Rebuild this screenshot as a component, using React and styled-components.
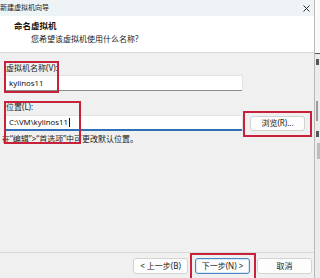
import React from "react";
import styled, { createGlobalStyle } from "styled-components";

const Global = createGlobalStyle`
  html, body { margin: 0; padding: 0; background: #f0f0f0; }
  body { font-family: "Noto Sans", "Noto Sans CJK SC", sans-serif; color: #1a1a1a; }
  #root { width: 320px; height: 278px; overflow: hidden; }
`;

const Screen = styled.div`
  width: 320px;
  height: 278px;
  display: flex;
  overflow: hidden;
`;

const Dialog = styled.div`
  position: relative;
  width: 314px;
  height: 278px;
  display: flex;
  flex-direction: column;
  background: #f0f0f0;
  border-right: 1px solid #b9b9b9;
`;

const TitleBar = styled.div`
  height: 16px;
  flex: none;
  display: flex;
  align-items: center;
  justify-content: space-between;
  background: #eef4f6;
  font-size: 7px;
  line-height: 10px;
  padding-right: 4px;
`;

const Header = styled.div`
  height: 37px;
  flex: none;
  box-sizing: border-box;
  background: #ffffff;
  border-bottom: 1px solid #d6d6d6;
  padding-top: 5px;
  display: flex;
  flex-direction: column;
  gap: 3px;
`;

const HeadTitle = styled.div`
  font-weight: 700;
  font-size: 8.5px;
  line-height: 10px;
  padding-left: 14px;
  color: #111;
`;

const HeadSub = styled.div`
  font-size: 8px;
  line-height: 10px;
  padding-left: 31px;
  color: #222;
`;

const Body = styled.div`
  flex: 1;
  padding: 10px 0 0 4px;
  display: flex;
  flex-direction: column;
  align-items: flex-start;
`;

const Label = styled.div`
  font-size: 8px;
  line-height: 10px;
  margin-top: ${(p) => p.$mt || 0}px;
  padding-left: 2px;
  color: #1a1a1a;
`;

const Row = styled.div`
  display: flex;
  align-items: center;
  margin-top: ${(p) => p.$mt || 0}px;
`;

const Input = styled.div`
  box-sizing: border-box;
  width: 239px;
  height: 16px;
  background: #ffffff;
  border: 1px solid #e3e3e3;
  border-bottom: ${(p) => (p.$focused ? "2px solid #2f6fb7" : "1px solid #8c8c8c")};
  border-radius: 2px;
  padding-left: 4px;
  font-size: 7.8px;
  line-height: ${(p) => (p.$focused ? "13px" : "14px")};
  color: #111;
  display: flex;
  align-items: center;
  margin-top: ${(p) => p.$mt || 0}px;
`;

const Caret = styled.span`
  display: inline-block;
  width: 1px;
  height: 9px;
  background: #111;
  margin-left: 1px;
`;

const Button = styled.div`
  box-sizing: border-box;
  width: ${(p) => p.$w || 55}px;
  height: ${(p) => p.$h || 16}px;
  background: #fdfdfd;
  border: 1px solid ${(p) => (p.$primary ? "#4a87c7" : "#d3d3d3")};
  box-shadow: ${(p) => (p.$primary ? "inset 0 0 0 1px #dbe8f5" : "none")};
  border-radius: 3px;
  font-size: 8px;
  line-height: 12px;
  display: flex;
  align-items: center;
  justify-content: center;
  color: #1a1a1a;
  margin-left: ${(p) => p.$ml || 0}px;
`;

const Hint = styled.div`
  font-size: 8px;
  line-height: 10px;
  margin-top: 3px;
  margin-left: -2px;
  color: #1a1a1a;
`;

const Footer = styled.div`
  height: 26px;
  flex: none;
  box-sizing: border-box;
  border-top: 1px solid #d9d9d9;
  display: flex;
  justify-content: flex-end;
  align-items: flex-start;
  padding: 5px 2px 0 0;
  gap: 7px;
`;

const Mark = styled.div`
  position: absolute;
  left: ${(p) => p.$x}px;
  top: ${(p) => p.$y}px;
  width: ${(p) => p.$w}px;
  height: ${(p) => p.$h}px;
  box-sizing: border-box;
  border: 2px solid #c8213b;
  pointer-events: none;
`;

const Side = styled.div`
  width: 5px;
  height: 278px;
  display: flex;
  flex-direction: column;
  background: #ececec;
`;

const SideTop = styled.div`
  height: 53px;
  background: #fafafa;
  border-bottom: 1px solid #5a5a5a;
`;

const SideBit = styled.div`
  height: ${(p) => p.$h}px;
  margin-top: ${(p) => p.$mt}px;
  width: ${(p) => p.$w || 3}px;
  margin-left: ${(p) => p.$ml || 1}px;
  background: ${(p) => p.$c};
`;

function CloseIcon() {
  return (
    <svg width="7" height="7" viewBox="0 0 7 7">
      <path d="M0.5 0.5 L6.5 6.5 M6.5 0.5 L0.5 6.5" stroke="#2a2a2a" strokeWidth="1" />
    </svg>
  );
}

export default function App() {
  return (
    <>
      <Global />
      <Screen>
        <Dialog>
          <TitleBar>
            <span>新建虚拟机向导</span>
            <CloseIcon />
          </TitleBar>
          <Header>
            <HeadTitle>命名虚拟机</HeadTitle>
            <HeadSub>您希望该虚拟机使用什么名称?</HeadSub>
          </Header>
          <Body>
            <Label>虚拟机名称(V):</Label>
            <Input $mt={2}>kylinos11</Input>
            <Label $mt={11}>位置(L):</Label>
            <Row $mt={3}>
              <Input $focused>
                C:\VM\kylinos11
                <Caret />
              </Input>
              <Button $ml={7} $h={15}>浏览(R)...</Button>
            </Row>
            <Hint>在“编辑”&gt;“首选项”中可更改默认位置。</Hint>
          </Body>
          <Footer>
            <Button>&lt; 上一步(B)</Button>
            <Button $primary>下一步(N) &gt;</Button>
            <Button>取消</Button>
          </Footer>
          <Mark $x={4} $y={61} $w={55} $h={32} />
          <Mark $x={4} $y={101} $w={77} $h={43} />
          <Mark $x={243} $y={111} $w={69} $h={26} />
          <Mark $x={190} $y={253} $w={66} $h={27} />
        </Dialog>
        <Side>
          <SideTop />
          <SideBit $mt={5} $h={6} $c="#555" />
          <SideBit $mt={36} $h={20} $c="#9a9a9a" $w={2} />
          <SideBit $mt={10} $h={6} $c="#555" />
          <SideBit $mt={6} $h={16} $c="#bdbdbd" $w={3} $ml={2} />
        </Side>
      </Screen>
    </>
  );
}
